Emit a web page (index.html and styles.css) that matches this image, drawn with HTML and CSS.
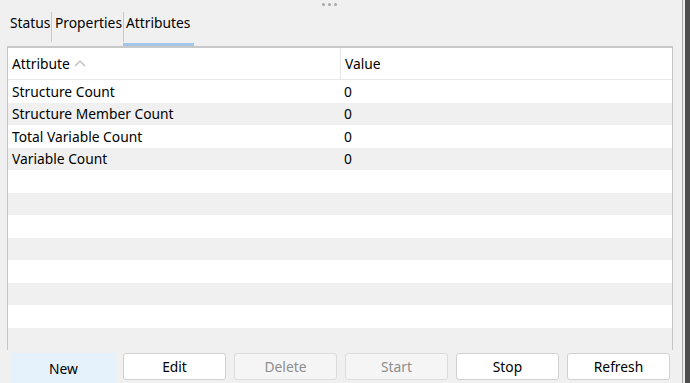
FILE: index.html
```html
<!DOCTYPE html>
<html>
<head>
<meta charset="utf-8">
<link rel="stylesheet" href="styles.css">
</head>
<body>
<div class="app">
  <div class="main">
    <div class="sash"><span class="dot"></span><span class="dot"></span><span class="dot"></span></div>
    <div class="tabs">
      <div class="tab t1">Status</div>
      <div class="tab t2">Properties</div>
      <div class="tab t3 active">Attributes</div>
    </div>
    <div class="table">
      <div class="row head">
        <div class="c1">Attribute <svg class="caret" width="12" height="8" viewBox="0 0 12 8"><path d="M1 7 L6 2 L11 7" fill="none" stroke="#b8b8b8" stroke-width="1.2"/></svg></div>
        <div class="c2">Value</div>
      </div>
      <div class="row"><div class="c1">Structure Count</div><div class="c2">0</div></div>
      <div class="row alt"><div class="c1">Structure Member Count</div><div class="c2">0</div></div>
      <div class="row"><div class="c1">Total Variable Count</div><div class="c2">0</div></div>
      <div class="row alt"><div class="c1">Variable Count</div><div class="c2">0</div></div>
      <div class="row"></div>
      <div class="row alt"></div>
      <div class="row"></div>
      <div class="row alt"></div>
      <div class="row"></div>
      <div class="row alt"></div>
      <div class="row"></div>
      <div class="row alt"></div>
    </div>
    <div class="buttons">
      <button class="btn flat">New</button>
      <button class="btn">Edit</button>
      <button class="btn disabled">Delete</button>
      <button class="btn disabled">Start</button>
      <button class="btn">Stop</button>
      <button class="btn">Refresh</button>
    </div>
  </div>
  <div class="edge"><div class="edge-line"></div><div class="edge-gap"></div><div class="edge-dark"></div></div>
</div>
</body>
</html>
```
FILE: styles.css
```css
html, body {
  margin: 0;
  padding: 0;
  background: #f0f0f0;
}
body {
  font-family: "Noto Sans", "Open Sans", sans-serif;
  font-size: 13.8px;
  color: #000;
}
.app {
  display: flex;
  width: 690px;
  height: 383px;
  overflow: hidden;
}
.main {
  width: 682px;
  display: flex;
  flex-direction: column;
}
.sash {
  height: 8px;
  display: flex;
  justify-content: center;
  align-items: center;
  gap: 3px;
  margin-left: -23px;
}
.dot {
  width: 3px;
  height: 3px;
  border-radius: 50%;
  background: #a8a8a8;
}
.tabs {
  display: flex;
  height: 38px;
  padding-left: 9px;
}
.tab {
  box-sizing: border-box;
  line-height: 1;
}
.t1 {
  width: 42px;
  padding-left: 1px;
  height: 30px;
  margin-top: 4px;
  padding-top: 4px;
}
.t2 {
  width: 72px;
  border-left: 1px solid #c8c8c8;
  padding-left: 3px;
  height: 30px;
  margin-top: 4px;
  padding-top: 4px;
}
.t3 {
  width: 71px;
  padding-left: 3px;
  position: relative;
  height: 38px;
  padding-top: 8px;
}
.t3::before {
  content: "";
  position: absolute;
  left: 0; top: 4px;
  height: 30px;
  border-left: 1px solid #c8c8c8;
}
.t3.active {
  border-bottom: 3px solid #a3c6e8;
}
.table {
  margin-left: 7px;
  width: 666px;
  box-sizing: border-box;
  border: 1px solid #c4c4c4;
  border-top: 2px solid #c8c8c8;
  background: #fff;
  height: 304px;
}
.row {
  display: flex;
  height: 22.5px;
  align-items: center;
}
.row.head {
  height: 31px;
  border-bottom: 1px solid #e6e6e6;
}
.row.alt { background: #f0f0f0; }
.c1 {
  width: 332px;
  padding-left: 4px;
  display: flex;
  align-items: center;
  height: 100%;
  box-sizing: border-box;
}
.head .c1 { border-right: 1px solid #e6e6e6; width: 333px; }
.c2 {
  padding-left: 4px;
}
.caret { margin-left: 4px; margin-top: -2px; }
.buttons {
  display: flex;
  gap: 8px;
  padding-left: 12px;
  margin-top: 3px;
}
.btn {
  width: 103px;
  height: 27px;
  box-sizing: border-box;
  border: 1px solid #d0d0d0;
  border-radius: 3px;
  background: #fff;
  font-family: inherit;
  font-size: 13.8px;
  color: #000;
  padding: 0;
}
.btn.flat {
  background: #e5f1fb;
  border-color: #e5f1fb;
  border-radius: 0;
  height: 30px;
}
.btn.disabled {
  background: #f5f5f5;
  border-color: #dcdcdc;
  color: #8d8d8d;
}
.edge {
  display: flex;
  width: 8px;
}
.edge-line { width: 1px; background: #a9a9a9; }
.edge-gap { width: 2px; background: #ececec; }
.edge-dark { flex: 1; background: #4d4d4d; }
```
